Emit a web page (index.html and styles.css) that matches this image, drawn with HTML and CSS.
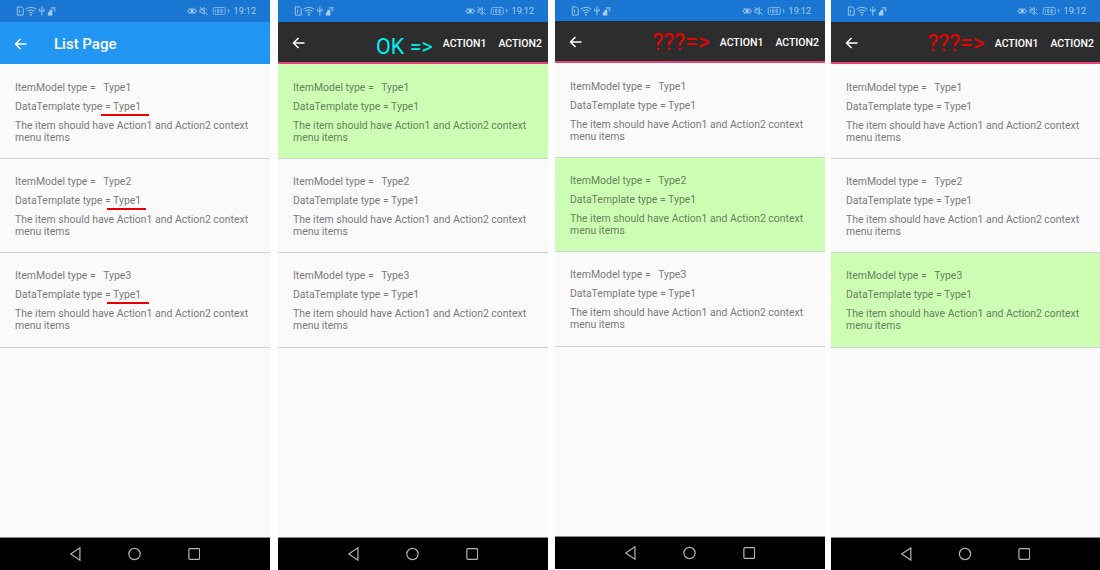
FILE: index.html
```html
<!DOCTYPE html>
<html lang="en">
<head>
  <meta charset="UTF-8">
  <title>List Page</title>
  <link rel="stylesheet" href="styles.css">
</head>
<body>
  <svg class="defs" width="0" height="0">
    <symbol id="status-left" viewBox="0 0 44 11">
      <path d="M2 1h4.500l2 2v7h-6.500z M4.500 4v3.500" fill="none" stroke="currentColor"/>
      <path d="M11 3.500q6-4 12 0M13 5.500q4-2.500 8 0M15 7.500q2-1.200 4 0" fill="none" stroke="currentColor"/>
      <circle cx="17" cy="9.500" r="1" fill="currentColor"/>
      <path d="M29 .5v10M26.500 3v2.500h5V3" fill="none" stroke="currentColor"/>
      <path d="M35.500 10.500v-3l2-1.500v-2h3v6.500z" fill="currentColor"/>
      <path d="M39 1h5v5h-2V3h-3z" fill="currentColor" opacity=".6"/>
    </symbol>
    <symbol id="status-right" viewBox="0 0 50 11">
      <circle cx="6" cy="5.500" r="2" fill="currentColor"/>
      <path d="M.5 5.500q5.500-5 11 0q-5.500 5-11 0zM2 2l1.500 1.500M10 2l-1.500 1.500M2 9l1.500-1.500M10 9l-1.500-1.500" fill="none" stroke="currentColor"/>
      <path d="M15 4h2l3-2.500v8l-3-2.500h-2zM15 1l9 9M22 3l1.500 1.500" fill="none" stroke="currentColor"/>
      <rect x="30.500" y="1.500" width="14" height="8" rx="1.500" fill="none" stroke="currentColor" stroke-width=".8"/>
      <path d="M33 3.500v4M35.500 3.500h1.500v4h-1.500zM39.500 3.500h1.500v4h-1.500z" fill="none" stroke="currentColor" stroke-width=".8"/>
      <path d="M49 2l-2 3.500h1.500l-1 3.500 2.300-4.200h-1.500z" fill="currentColor"/>
    </symbol>
    <symbol id="back" viewBox="0 0 13 12">
      <path d="M12.500 6H1.500M6.500 1l-5 5 5 5" fill="none" stroke="currentColor" stroke-width="1.500"/>
    </symbol>
    <symbol id="nav" viewBox="0 0 131 14">
      <path d="M10 .8v12.400L.7 7z" fill="none" stroke="currentColor" stroke-width="1.200"/>
      <circle cx="65" cy="7" r="5.700" fill="none" stroke="currentColor" stroke-width="1.200"/>
      <rect x="119.800" y="1.600" width="10.800" height="10.800" rx="1" fill="none" stroke="currentColor" stroke-width="1.200"/>
    </symbol>
  </svg>

  <div class="screens">
    <!-- plain list page -->
    <section class="phone">
      <div class="status">
        <svg class="status-left"><use href="#status-left"/></svg>
        <svg class="status-right"><use href="#status-right"/></svg>
        <span>19:12</span>
      </div>
      <header class="toolbar toolbar-blue">
        <svg class="back"><use href="#back"/></svg>
        <h1>List Page</h1>
      </header>
      <div class="list">
        <div class="item">
          <p>ItemModel type = &nbsp; Type1</p>
          <p class="template">DataTemplate type = Type1<i class="mark mark-1"></i></p>
          <p class="note">The item should have Action1 and Action2 context menu items</p>
        </div>
        <div class="item">
          <p>ItemModel type = &nbsp; Type2</p>
          <p class="template">DataTemplate type = Type1<i class="mark mark-2"></i></p>
          <p class="note">The item should have Action1 and Action2 context menu items</p>
        </div>
        <div class="item">
          <p>ItemModel type = &nbsp; Type3</p>
          <p class="template">DataTemplate type = Type1<i class="mark mark-3"></i></p>
          <p class="note">The item should have Action1 and Action2 context menu items</p>
        </div>
      </div>
      <svg class="nav-icons"><use href="#nav"/></svg>
    </section>

    <!-- first item selected -->
    <section class="phone">
      <div class="status">
        <svg class="status-left"><use href="#status-left"/></svg>
        <svg class="status-right"><use href="#status-right"/></svg>
        <span>19:12</span>
      </div>
      <header class="toolbar toolbar-dark">
        <svg class="back"><use href="#back"/></svg>
        <em class="ok">OK =&gt;</em>
        <b>ACTION1</b>
        <b>ACTION2</b>
      </header>
      <div class="list">
        <div class="item selected">
          <p>ItemModel type = &nbsp; Type1</p>
          <p class="template">DataTemplate type = Type1</p>
          <p class="note">The item should have Action1 and Action2 context menu items</p>
        </div>
        <div class="item">
          <p>ItemModel type = &nbsp; Type2</p>
          <p class="template">DataTemplate type = Type1</p>
          <p class="note">The item should have Action1 and Action2 context menu items</p>
        </div>
        <div class="item">
          <p>ItemModel type = &nbsp; Type3</p>
          <p class="template">DataTemplate type = Type1</p>
          <p class="note">The item should have Action1 and Action2 context menu items</p>
        </div>
      </div>
      <svg class="nav-icons"><use href="#nav"/></svg>
    </section>

    <!-- second item selected -->
    <section class="phone phone-up">
      <div class="status">
        <svg class="status-left"><use href="#status-left"/></svg>
        <svg class="status-right"><use href="#status-right"/></svg>
        <span>19:12</span>
      </div>
      <header class="toolbar toolbar-dark">
        <svg class="back"><use href="#back"/></svg>
        <em class="wrong">???=&gt;</em>
        <b>ACTION1</b>
        <b>ACTION2</b>
      </header>
      <div class="list">
        <div class="item">
          <p>ItemModel type = &nbsp; Type1</p>
          <p class="template">DataTemplate type = Type1</p>
          <p class="note">The item should have Action1 and Action2 context menu items</p>
        </div>
        <div class="item selected">
          <p>ItemModel type = &nbsp; Type2</p>
          <p class="template">DataTemplate type = Type1</p>
          <p class="note">The item should have Action1 and Action2 context menu items</p>
        </div>
        <div class="item">
          <p>ItemModel type = &nbsp; Type3</p>
          <p class="template">DataTemplate type = Type1</p>
          <p class="note">The item should have Action1 and Action2 context menu items</p>
        </div>
      </div>
      <svg class="nav-icons"><use href="#nav"/></svg>
    </section>

    <!-- third item selected -->
    <section class="phone">
      <div class="status">
        <svg class="status-left"><use href="#status-left"/></svg>
        <svg class="status-right"><use href="#status-right"/></svg>
        <span>19:12</span>
      </div>
      <header class="toolbar toolbar-dark">
        <svg class="back"><use href="#back"/></svg>
        <em class="wrong">???=&gt;</em>
        <b>ACTION1</b>
        <b>ACTION2</b>
      </header>
      <div class="list">
        <div class="item">
          <p>ItemModel type = &nbsp; Type1</p>
          <p class="template">DataTemplate type = Type1</p>
          <p class="note">The item should have Action1 and Action2 context menu items</p>
        </div>
        <div class="item">
          <p>ItemModel type = &nbsp; Type2</p>
          <p class="template">DataTemplate type = Type1</p>
          <p class="note">The item should have Action1 and Action2 context menu items</p>
        </div>
        <div class="item selected">
          <p>ItemModel type = &nbsp; Type3</p>
          <p class="template">DataTemplate type = Type1</p>
          <p class="note">The item should have Action1 and Action2 context menu items</p>
        </div>
      </div>
      <svg class="nav-icons"><use href="#nav"/></svg>
    </section>
  </div>
</body>
</html>
```

FILE: styles.css
```css
* {
  box-sizing: border-box;
  margin: 0;
  padding: 0;
}

body {
  width: 1100px;
  height: 570px;
  overflow: hidden;
  background: #fff;
  font-family: Roboto, sans-serif;
  color: #7a7a7a;
}

.defs {
  display: block;
  height: 0;
}

.screens {
  display: flex;
  height: 570px;
  gap: 8px;
}

.phone {
  flex: 0 0 270px;
  height: 570px;
  display: flex;
  flex-direction: column;
  background: #fafafa;
}

.phone + .phone + .phone {
  margin-left: -1px;
}

.phone + .phone + .phone + .phone {
  margin-left: -2px;
  flex-basis: 269px;
}

.phone-up {
  height: 569px;
}

.status {
  flex: 0 0 22px;
  display: flex;
  align-items: center;
  padding: 0 14px 0 15px;
  background: #1976d2;
  color: #a9cdf0;
  font-size: 9px;
}

.phone-up .status {
  flex-basis: 21px;
}

.status-left {
  width: 41px;
  height: 10px;
}

.status-right {
  width: 43px;
  height: 10px;
  margin-left: auto;
  margin-right: 4px;
}

.toolbar {
  flex: 0 0 42px;
  display: flex;
  align-items: center;
  padding: 1px 6px 0 14px;
  color: #fff;
}

.toolbar-blue {
  background: #2196f3;
}

.toolbar-dark {
  background: #2d2d2d;
  border-bottom: 2px solid #e8447a;
}

.back {
  flex: none;
  width: 13px;
  height: 12px;
}

.toolbar h1 {
  margin-left: 27px;
  font-size: 15px;
  font-weight: 500;
}

.toolbar b {
  margin: 2px 0 0 12px;
  font-size: 10.5px;
  font-weight: 500;
}

.toolbar em {
  margin-left: auto;
  margin-right: -2px;
  font-style: normal;
  line-height: 1;
}

.ok {
  margin-top: 8px;
  font-size: 21.5px;
  color: #00f0f0;
}

.wrong {
  margin-top: 2px;
  font-size: 23px;
  color: #f00000;
}

.list {
  flex: 1;
}

.item {
  height: 94.5px;
  padding: 17px 15px 0;
  border-bottom: 1px solid #d2d2d2;
  font-size: 10.45px;
  line-height: 12px;
}

.item:first-child {
  padding-top: 18px;
}

.item.selected {
  background: #ccffb3;
  color: #6a8060;
}

.item p + p {
  margin-top: 7px;
}

.template {
  position: relative;
}

/* red hand-drawn underlines on the first screen */
.mark {
  position: absolute;
  height: 2px;
  background: #e80000;
}

.mark-1 {
  left: 86px;
  width: 48px;
  top: 13px;
}

.mark-2 {
  left: 92px;
  width: 39px;
  top: 13px;
}

.mark-3 {
  left: 92px;
  width: 42px;
  top: 13px;
}

.nav-icons {
  flex: 0 0 33px;
  width: 100%;
  padding: 9px 70px;
  background: #000;
  border-top: 1px solid #8a8a8a;
  color: #b5b5b5;
}
```
